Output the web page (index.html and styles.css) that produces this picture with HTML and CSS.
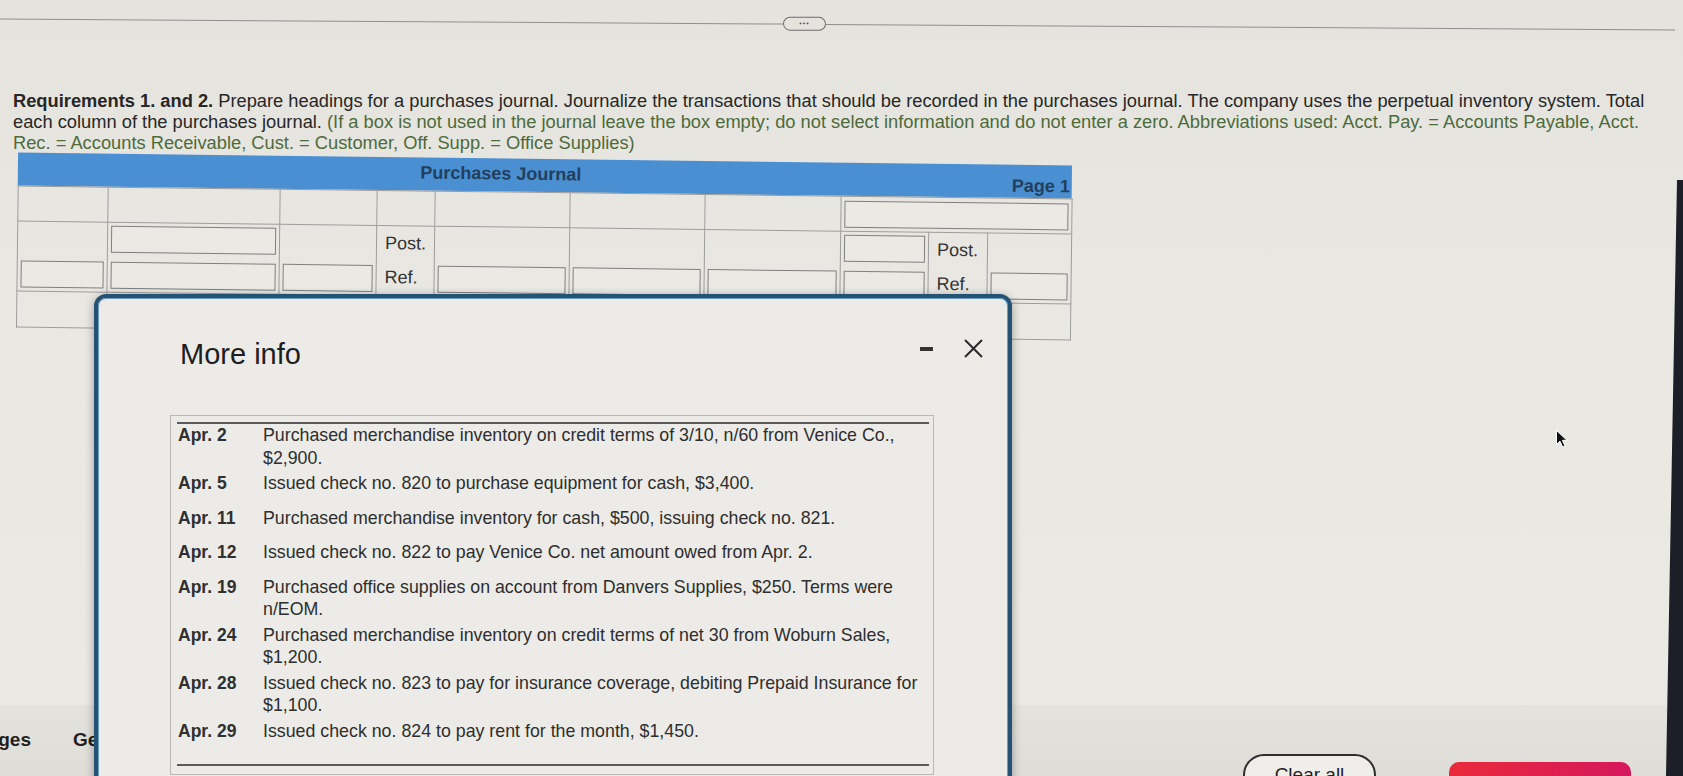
FILE: index.html
```html
<!DOCTYPE html>
<html lang="en">
<head>
<meta charset="utf-8">
<title>Purchases Journal</title>
<link rel="stylesheet" href="styles.css">
</head>
<body>
<div class="screen">
  <div class="topbar">
    <div class="rule"></div>
    <span class="pill">&bull;&bull;&bull;</span>
    <div class="rule"></div>
  </div>

  <p class="req"><b>Requirements 1. and 2.</b> Prepare headings for a purchases journal. Journalize the transactions that should be recorded in the purchases journal. The company uses the perpetual inventory system. Total each column of the purchases journal. <span class="note">(If a box is not used in the journal leave the box empty; do not select information and do not enter a zero. Abbreviations used: Acct. Pay. = Accounts Payable, Acct. Rec. = Accounts Receivable, Cust. = Customer, Off. Supp. = Office Supplies)</span></p>

  <div class="journal">
    <div class="jhead">
      <span class="jtitle">Purchases Journal</span>
      <span class="jpage">Page 1</span>
    </div>
    <table class="jtable">
      <colgroup>
        <col class="c1"><col class="c2"><col class="c3"><col class="c4"><col class="c5"><col class="c6"><col class="c7"><col class="c8"><col class="c9"><col class="c10">
      </colgroup>
      <tr class="r1">
        <td></td><td></td><td></td><td></td><td></td><td></td><td></td>
        <td colspan="3"><div class="box"></div></td>
      </tr>
      <tr class="r2">
        <td><div class="box"></div></td>
        <td><div class="stack"><div class="box"></div><div class="box"></div></div></td>
        <td><div class="box"></div></td>
        <td class="ref"><div class="ref-in"><span>Post.</span><span>Ref.</span></div></td>
        <td><div class="box"></div></td>
        <td><div class="box"></div></td>
        <td><div class="box"></div></td>
        <td><div class="stack"><div class="box"></div><div class="box"></div></div></td>
        <td class="ref"><div class="ref-in"><span>Post.</span><span>Ref.</span></div></td>
        <td><div class="box"></div></td>
      </tr>
      <tr class="r3">
        <td></td><td></td><td></td><td></td><td></td><td></td><td></td><td></td><td></td><td></td>
      </tr>
    </table>
  </div>

  <div class="footer">
    <div class="tabs">
      <span>Pages</span>
      <span class="tab-hidden">General</span>
    </div>
    <div class="actions">
      <button class="btn-clear" type="button">Clear all</button>
      <button class="btn-check" type="button">Check answer</button>
    </div>
  </div>

  <div class="modal">
    <div class="mhead">
      <h2 class="mtitle">More info</h2>
      <span class="minus"></span>
      <svg class="close" viewBox="0 0 21 21" width="21" height="21"><path d="M2 2 L19 19 M19 2 L2 19" stroke="#2a2a2a" stroke-width="2" fill="none"/></svg>
    </div>
    <div class="tx-box">
      <table class="tx">
        <tr class="two"><td class="d">Apr. 2</td><td>Purchased merchandise inventory on credit terms of 3/10, n/60 from Venice Co., $2,900.</td></tr>
        <tr><td class="d">Apr. 5</td><td>Issued check no. 820 to purchase equipment for cash, $3,400.</td></tr>
        <tr><td class="d">Apr. 11</td><td>Purchased merchandise inventory for cash, $500, issuing check no. 821.</td></tr>
        <tr><td class="d">Apr. 12</td><td>Issued check no. 822 to pay Venice Co. net amount owed from Apr. 2.</td></tr>
        <tr class="two"><td class="d">Apr. 19</td><td>Purchased office supplies on account from Danvers Supplies, $250. Terms were n/EOM.</td></tr>
        <tr class="two"><td class="d">Apr. 24</td><td>Purchased merchandise inventory on credit terms of net 30 from Woburn Sales, $1,200.</td></tr>
        <tr class="two"><td class="d">Apr. 28</td><td>Issued check no. 823 to pay for insurance coverage, debiting Prepaid Insurance for $1,100.</td></tr>
        <tr class="last"><td class="d">Apr. 29</td><td>Issued check no. 824 to pay rent for the month, $1,450.</td></tr>
      </table>
    </div>
  </div>

  <svg class="cursor" viewBox="0 0 14 20" width="14" height="20"><path d="M1.5 1.5 L1.5 15.5 L5 12.2 L7.6 18 L10 17 L7.4 11.3 L12 11.3 Z" fill="#111" stroke="#fff" stroke-width="1"/></svg>
  <div class="bezel"></div>
</div>
</body>
</html>
```

FILE: styles.css
```css
* { box-sizing: border-box; }
html, body { margin: 0; padding: 0; }
body {
  width: 1683px;
  height: 776px;
  overflow: hidden;
  background: #e8e6e1;
  font-family: "Liberation Sans", Arial, Helvetica, sans-serif;
  color: #262626;
}
.screen {
  position: relative;
  width: 1683px;
  height: 776px;
  overflow: hidden;
  display: flex;
  flex-direction: column;
  background: linear-gradient(180deg, #e5e3de 0%, #eae8e3 45%, #ebe9e4 100%);
}

/* top rule with pill (photo is slightly tilted) */
.topbar {
  display: grid;
  grid-template-columns: 783px 43px 1fr;
  align-items: center;
  height: 48px;
  padding-right: 8px;
  flex: none;
  transform: rotate(0.37deg);
}
.rule { border-top: 1.5px solid #8f8f8f; }
.pill {
  height: 14px;
  border: 1.5px solid #6e6e6e;
  border-radius: 8px;
  font-size: 7px;
  line-height: 11px;
  text-align: center;
  color: #555;
  letter-spacing: 1px;
}

/* requirements */
.req {
  margin: 42px 0 0;
  padding-left: 13px;
  width: 1668px;
  font-size: 18.3px;
  line-height: 21px;
  color: #272727;
  flex: none;
}
.note { color: #4d6b3b; }

/* journal */
.journal {
  margin: 6px 0 0 17px;
  width: 1054px;
  flex: none;
  transform: rotate(0.7deg);
}
.jhead {
  display: flex;
  height: 33px;
  background: #4a8fd2;
  color: #22405d;
  font-weight: bold;
  font-size: 18px;
}
.jtitle {
  flex: 1;
  text-align: center;
  line-height: 24px;
  padding-top: 3px;
}
.jpage {
  width: 88px;
  text-align: right;
  padding: 11px 2px 0 0;
  line-height: 20px;
}
.jtable {
  border-collapse: collapse;
  table-layout: fixed;
  width: 1054px;
}
.c1 { width: 90px; } .c2 { width: 172px; } .c3 { width: 97px; } .c4 { width: 58px; }
.c5 { width: 135px; } .c6 { width: 135px; } .c7 { width: 136px; }
.c8 { width: 88px; } .c9 { width: 59px; } .c10 { width: 84px; }
.jtable td {
  border: 1px solid #9d9d9d;
  padding: 0 3px;
  vertical-align: bottom;
}
.r1 { height: 35px; }
.r2 { height: 70px; }
.r3 { height: 36px; }
.box {
  height: 27px;
  border: 1px solid #7f7f7f;
  background: #eae9e4;
  margin-bottom: 3px;
}
.stack {
  display: flex;
  flex-direction: column;
  gap: 6px;
}
.jtable td.ref {
  vertical-align: top;
  padding: 0 0 0 8px;
  font-size: 18px;
  color: #333;
}
.ref-in {
  display: flex;
  flex-direction: column;
  justify-content: space-around;
  height: 68px;
  line-height: 21px;
}

/* footer */
.footer {
  margin-top: auto;
  height: 71px;
  flex: none;
  display: flex;
  align-items: flex-start;
  padding: 24px 52px 0 0;
  background: linear-gradient(180deg, #e4e2dd 0%, #dfddd8 100%);
}
.tabs {
  display: flex;
  gap: 42px;
  margin-left: -25px;
  font-weight: bold;
  font-size: 19px;
  line-height: 22px;
  color: #1f1f1f;
  white-space: nowrap;
}
.actions {
  margin-left: auto;
  display: flex;
  gap: 73px;
  align-items: flex-start;
}
.btn-clear {
  margin-top: 25px;
  width: 133px;
  height: 42px;
  border: 2px solid #2e2e2e;
  border-radius: 21px;
  background: #efeeea;
  font-family: inherit;
  font-size: 19px;
  line-height: 36px;
  padding: 0;
  text-align: center;
  color: #222;
}
.btn-check {
  margin-top: 33px;
  width: 182px;
  height: 44px;
  border: none;
  border-radius: 10px;
  background: linear-gradient(90deg, #ea2a3b, #d5175d);
  color: #fff;
  font-family: inherit;
  font-weight: bold;
  font-size: 19px;
  line-height: 36px;
  padding: 0;
  text-align: center;
}

/* modal overlay */
.modal {
  position: absolute;
  left: 94px;
  top: 294px;
  width: 918px;
  height: 520px;
  background: #ecebe7;
  border: 4px solid #245275;
  border-radius: 12px 12px 0 0;
  box-shadow: 0 2px 10px rgba(0, 0, 0, 0.35), inset 0 0 0 1px #6d9dc3;
  padding: 38px 24px 0 72px;
}
.mhead {
  display: flex;
  align-items: center;
  height: 36px;
}
.mtitle {
  margin: 0 0 0 10px;
  flex: 1;
  font-size: 29px;
  font-weight: normal;
  line-height: 36px;
  color: #1e1e1e;
}
.minus {
  width: 13px;
  height: 4px;
  background: #333;
  margin-bottom: 10px;
}
.close {
  margin-left: 30px;
  margin-bottom: 12px;
  display: block;
}
.tx-box {
  margin-top: 43px;
  width: 764px;
  border: 1px solid #b9b9b9;
  padding: 6px 5px 8px 6px;
}
.tx {
  border-collapse: collapse;
  width: 752px;
  border-top: 2px solid #5a5a5a;
  border-bottom: 2px solid #5a5a5a;
}
.tx tr { height: 34.5px; }
.tx tr.last { height: 45px; }
.tx td {
  vertical-align: top;
  padding: 0 0 3px;
  line-height: 22.5px;
  font-size: 17.8px;
  color: #2e2e2e;
}
.tx td.d {
  width: 86px;
  padding-left: 1px;
  font-weight: bold;
  font-size: 17.5px;
  color: #303030;
  white-space: nowrap;
}

/* overlays: mouse pointer and screen bezel */
.cursor {
  position: absolute;
  left: 1555px;
  top: 429px;
}
.bezel {
  position: absolute;
  right: 0;
  top: 0;
  width: 24px;
  height: 776px;
  background: #1c1f27;
  clip-path: polygon(18px 180px, 24px 180px, 24px 776px, 7px 776px);
}
```
